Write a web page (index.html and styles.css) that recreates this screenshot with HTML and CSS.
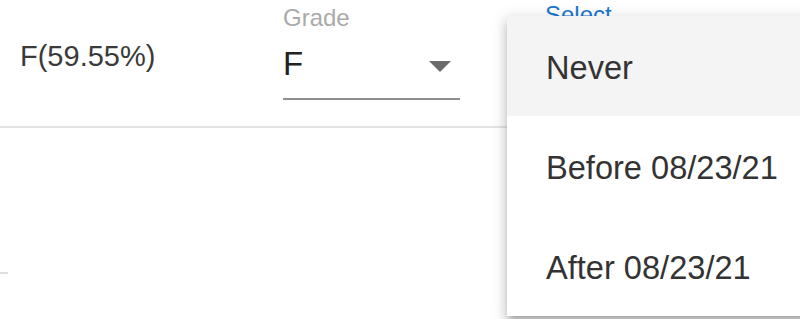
FILE: index.html
```html
<!DOCTYPE html>
<html lang="en">
<head>
  <meta charset="UTF-8">
  <meta name="viewport" content="width=device-width, initial-scale=1.0">
  <title>Grade Row</title>
  <link rel="stylesheet" href="styles.css">
</head>
<body>
  <!-- Grade row -->
  <div class="grade-row">
    <div class="score">F(59.55%)</div>

    <div class="field grade-field">
      <label class="field-label">Grade</label>
      <div class="select-input">
        <span class="select-value">F</span>
        <span class="select-arrow"></span>
      </div>
    </div>

    <div class="field late-field">
      <label class="field-label active">Select</label>
    </div>
  </div>

  <div class="next-row">
    <div class="row-divider"></div>
  </div>

  <!-- Open dropdown -->
  <ul class="menu">
    <li class="menu-item selected">Never</li>
    <li class="menu-item">Before 08/23/21</li>
    <li class="menu-item">After 08/23/21</li>
  </ul>
</body>
</html>
```

FILE: styles.css
```css
body {
  margin: 0;
  font-family: "Liberation Sans", Arial, sans-serif;
  color: #333;
  background: #fff;
  overflow: hidden;
}
.grade-row {
  display: flex;
  align-items: flex-start;
  height: 126px;
  padding-left: 20px;
  border-bottom: 2px solid #e4e4e4;
}
.score {
  width: 263px;
  margin-top: 39px;
  font-size: 29px;
  line-height: 34px;
  color: #3a3a3a;
}
.field {
  display: flex;
  flex-direction: column;
  padding-top: 4px;
}
.field-label {
  font-size: 24px;
  line-height: 28px;
  color: #aaa;
}
.field-label.active {
  color: #1976d2;
  margin-top: -3px;
}
.grade-field {
  width: 177px;
}
.late-field {
  margin-left: 85px;
}
.select-input {
  display: flex;
  align-items: center;
  justify-content: space-between;
  margin-top: 13px;
  padding-bottom: 15px;
  border-bottom: 2px solid #8f8f8f;
}
.select-value {
  font-size: 33px;
  line-height: 38px;
  color: #222;
}
.select-arrow {
  width: 0;
  height: 0;
  margin-right: 9px;
  margin-top: 4px;
  border-left: 11px solid transparent;
  border-right: 11px solid transparent;
  border-top: 11px solid #6b6b6b;
}
.next-row {
  padding-top: 144px;
}
.row-divider {
  width: 8px;
  height: 2px;
  background: #e0e0e0;
}
.menu {
  position: absolute;
  left: 507px;
  top: 16px;
  width: 320px;
  margin: 0;
  padding: 0;
  list-style: none;
  background: #fff;
  box-shadow: 0 5px 5px -3px rgba(0,0,0,0.2), 0 8px 10px 1px rgba(0,0,0,0.14), 0 3px 14px 2px rgba(0,0,0,0.12);
}
.menu-item {
  height: 100px;
  line-height: 104px;
  padding-left: 39px;
  font-size: 32.6px;
  color: #333;
}
.menu-item.selected {
  background: #f4f4f4;
}
```
